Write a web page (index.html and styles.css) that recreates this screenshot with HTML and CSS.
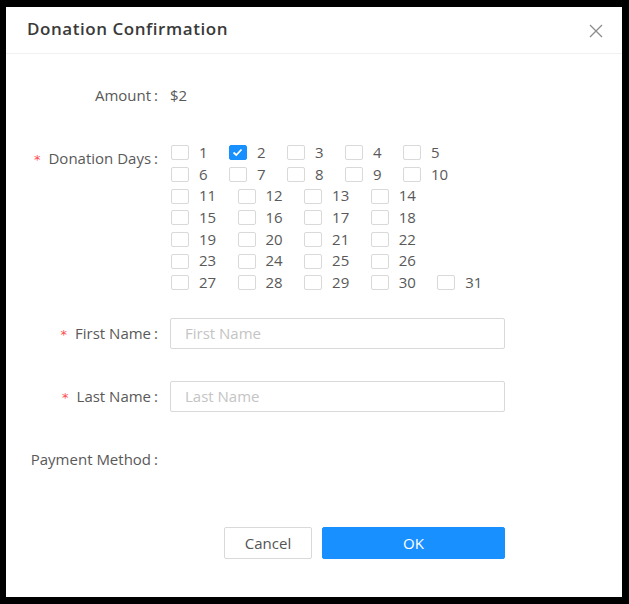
FILE: index.html
```html
<!DOCTYPE html>
<html>
<head>
<meta charset="utf-8">
<title>Donation Confirmation</title>
<link rel="stylesheet" href="styles.css">
</head>
<body>
<div class="modal">
  <div class="modal-header">
    <div class="modal-title">Donation Confirmation</div>
    <svg class="close" width="14" height="14" viewBox="0 0 14 14"><path d="M1 1L13 13M13 1L1 13" stroke="#8c8c8c" stroke-width="1.3" fill="none"/></svg>
  </div>
  <div class="modal-body">
    <div class="row row-amount">
      <div class="label">Amount<span class="colon">:</span></div>
      <div class="control text">$2</div>
    </div>
    <div class="row row-days">
      <div class="label"><span class="req">*</span>Donation Days<span class="colon">:</span></div>
      <div class="control days">
        <div class="day-row">
          <label class="cb"><span class="box"></span>1</label>
          <label class="cb"><span class="box checked"><svg width="11" height="9" viewBox="0 0 11 9"><path d="M1.5 4.5L4.3 7L9.5 1.5" stroke="#fff" stroke-width="1.8" fill="none"/></svg></span>2</label>
          <label class="cb"><span class="box"></span>3</label>
          <label class="cb"><span class="box"></span>4</label>
          <label class="cb"><span class="box"></span>5</label>
        </div>
        <div class="day-row">
          <label class="cb"><span class="box"></span>6</label>
          <label class="cb"><span class="box"></span>7</label>
          <label class="cb"><span class="box"></span>8</label>
          <label class="cb"><span class="box"></span>9</label>
          <label class="cb"><span class="box"></span>10</label>
        </div>
        <div class="day-row">
          <label class="cb"><span class="box"></span>11</label>
          <label class="cb"><span class="box"></span>12</label>
          <label class="cb"><span class="box"></span>13</label>
          <label class="cb"><span class="box"></span>14</label>
        </div>
        <div class="day-row">
          <label class="cb"><span class="box"></span>15</label>
          <label class="cb"><span class="box"></span>16</label>
          <label class="cb"><span class="box"></span>17</label>
          <label class="cb"><span class="box"></span>18</label>
        </div>
        <div class="day-row">
          <label class="cb"><span class="box"></span>19</label>
          <label class="cb"><span class="box"></span>20</label>
          <label class="cb"><span class="box"></span>21</label>
          <label class="cb"><span class="box"></span>22</label>
        </div>
        <div class="day-row">
          <label class="cb"><span class="box"></span>23</label>
          <label class="cb"><span class="box"></span>24</label>
          <label class="cb"><span class="box"></span>25</label>
          <label class="cb"><span class="box"></span>26</label>
        </div>
        <div class="day-row">
          <label class="cb"><span class="box"></span>27</label>
          <label class="cb"><span class="box"></span>28</label>
          <label class="cb"><span class="box"></span>29</label>
          <label class="cb"><span class="box"></span>30</label>
          <label class="cb"><span class="box"></span>31</label>
        </div>
      </div>
    </div>
    <div class="row row-first">
      <div class="label"><span class="req">*</span>First Name<span class="colon">:</span></div>
      <div class="control"><input class="input" placeholder="First Name"></div>
    </div>
    <div class="row row-last">
      <div class="label"><span class="req">*</span>Last Name<span class="colon">:</span></div>
      <div class="control"><input class="input" placeholder="Last Name"></div>
    </div>
    <div class="row row-pay">
      <div class="label">Payment Method<span class="colon">:</span></div>
      <div class="control"></div>
    </div>
    <div class="row row-footer">
      <div class="label"></div>
      <div class="control footer">
        <button class="btn btn-default">Cancel</button>
        <button class="btn btn-primary">OK</button>
      </div>
    </div>
  </div>
</div>
</body>
</html>
```
FILE: styles.css
```css
html, body {
  margin: 0;
  padding: 0;
  background: #000;
}
body {
  padding: 7px 7px 7px 6px;
  font-family: "Open Sans", "Noto Sans", sans-serif;
  font-size: 15px;
  color: #595959;
}
.modal {
  width: 616px;
  height: 590px;
  background: #fff;
  box-sizing: border-box;
}
.modal-header {
  height: 47px;
  box-sizing: border-box;
  border-bottom: 1px solid #f0f0f0;
  display: flex;
  align-items: center;
  justify-content: space-between;
  padding: 0 19px 0 21px;
}
.modal-title {
  font-size: 17px;
  font-weight: 600;
  letter-spacing: 0.55px;
  color: #3a3a3a;
  margin-top: -4px;
}
.close {
  margin-top: 2px;
}
.modal-body {
  padding-top: 25px;
}
.row {
  display: grid;
  grid-template-columns: 154px 335px;
  column-gap: 10px;
}
.label {
  text-align: right;
  line-height: 32px;
  height: 32px;
  white-space: nowrap;
  color: #595959;
}
.colon {
  margin-left: 3px;
  margin-right: 2px;
}
.req {
  color: #ff4d4f;
  margin-right: 8px;
  font-family: "DejaVu Sans", sans-serif;
  font-size: 13px;
}
.text {
  line-height: 32px;
  color: #595959;
}
.row-days {
  margin-top: 31px;
}
.days {
  display: flex;
  flex-direction: column;
}
.day-row {
  display: flex;
  height: 21.7px;
  align-items: center;
}
.cb {
  display: inline-flex;
  align-items: center;
  gap: 10px;
  margin-right: 20.4px;
  color: #595959;
  line-height: 21.7px;
}
.box {
  width: 18px;
  height: 15px;
  box-sizing: border-box;
  border: 1px solid #d9d9d9;
  border-radius: 2px;
  background: #fff;
  display: inline-flex;
  align-items: center;
  justify-content: center;
  margin-left: 1px;
}
.box.checked {
  background: #1890ff;
  border-color: #1890ff;
}
.row-first {
  margin-top: 24px;
}
.row-first .label,
.row-last .label {
  line-height: 31px;
}
.row-last {
  margin-top: 31px;
}
.input {
  display: block;
  width: 335px;
  height: 31px;
  box-sizing: border-box;
  border: 1px solid #d9d9d9;
  border-radius: 2px;
  padding: 0 14px;
  font-family: "Open Sans", "Noto Sans", sans-serif;
  font-size: 15px;
  color: #595959;
  outline: none;
}
.input::placeholder {
  color: #c4c4c4;
}
.row-pay {
  margin-top: 30px;
}
.row-footer {
  margin-top: 52px;
}
.footer {
  display: flex;
  justify-content: flex-end;
  gap: 10px;
}
.btn {
  height: 32px;
  border-radius: 2px;
  font-family: "Open Sans", "Noto Sans", sans-serif;
  font-size: 15px;
  cursor: pointer;
}
.btn-default {
  width: 88px;
  background: #fff;
  border: 1px solid #d9d9d9;
  color: #555;
}
.btn-primary {
  width: 183px;
  background: #1890ff;
  border: 1px solid #1890ff;
  color: #fff;
}
```
